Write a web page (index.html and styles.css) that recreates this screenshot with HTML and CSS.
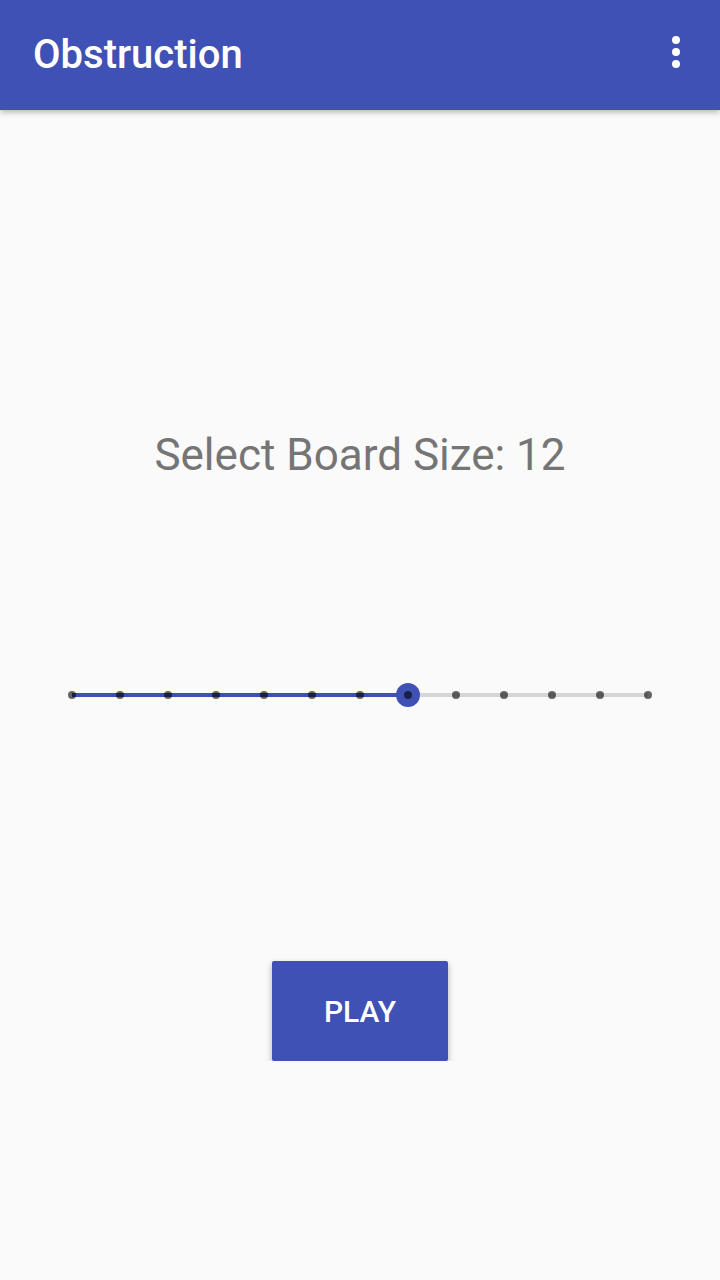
FILE: index.html
```html
<!DOCTYPE html>
<html>
<head>
<meta charset="UTF-8">
<title>Obstruction</title>
<link rel="stylesheet" href="styles.css">
</head>
<body>
<div class="appbar">
	<div class="title">Obstruction</div>
	<div class="menu">
		<span class="dot"></span>
		<span class="dot"></span>
		<span class="dot"></span>
	</div>
</div>
<div class="main">
	<div class="label">Select Board Size: 12</div>
	<div class="slider">
		<div class="track"></div>
		<div class="fill" style="width:58.333%"></div>
		<div class="ticks">
			<span class="tick"></span><span class="tick"></span><span class="tick"></span>
			<span class="tick"></span><span class="tick"></span><span class="tick"></span>
			<span class="tick"></span><span class="tick"></span><span class="tick"></span>
			<span class="tick"></span><span class="tick"></span><span class="tick"></span>
			<span class="tick"></span>
		</div>
		<div class="thumb" style="left:58.333%"><span class="tick"></span></div>
	</div>
	<button class="play">PLAY</button>
</div>
</body>
</html>
```

FILE: styles.css
```css
html,
body{
	margin:0;
	padding:0;
	background-color:#fafafa;
	font-family:Roboto, "Noto Sans", sans-serif;
}
.appbar{
	height:110px;
	background-color:#3f51b5;
	display:flex;
	align-items:center;
	justify-content:space-between;
	padding:0 40px 0 33px;
	box-shadow:0 2px 6px rgba(0,0,0,0.3);
	position:relative;
}
.title{
	color:#fff;
	font-size:40px;
	font-weight:500;
	margin-top:-2px;
}
.menu{
	display:flex;
	flex-direction:column;
	gap:4px;
	margin-top:-6px;
}
.dot{
	width:8px;
	height:8px;
	border-radius:50%;
	background-color:#fff;
}
.main{
	display:flex;
	flex-direction:column;
	align-items:center;
}
.label{
	margin-top:317px;
	font-size:44px;
	line-height:56px;
	color:#757575;
}
.slider{
	position:relative;
	width:576px;
	height:24px;
	margin-top:200px;
}
.track,
.fill{
	position:absolute;
	left:0;
	top:10px;
	height:4px;
}
.track{
	right:0;
	background-color:#d6d6d6;
}
.fill{
	background-color:#3f51b5;
}
.ticks{
	position:relative;
	display:flex;
	justify-content:space-between;
	align-items:center;
	height:24px;
	margin:0 -4px;
}
.tick{
	width:8px;
	height:8px;
	border-radius:50%;
	background-color:rgba(0,0,0,0.6);
}
.thumb{
	position:absolute;
	top:0;
	width:24px;
	height:24px;
	margin-left:-12px;
	border-radius:50%;
	background-color:#3f51b5;
	display:flex;
	align-items:center;
	justify-content:center;
}
.play{
	margin-top:254px;
	width:176px;
	height:100px;
	border:0;
	border-radius:2px;
	background-color:#3f51b5;
	color:#fff;
	font-family:Roboto, "Noto Sans", sans-serif;
	font-size:30px;
	font-weight:500;
	box-shadow:0 3px 6px rgba(0,0,0,0.3);
}
```
